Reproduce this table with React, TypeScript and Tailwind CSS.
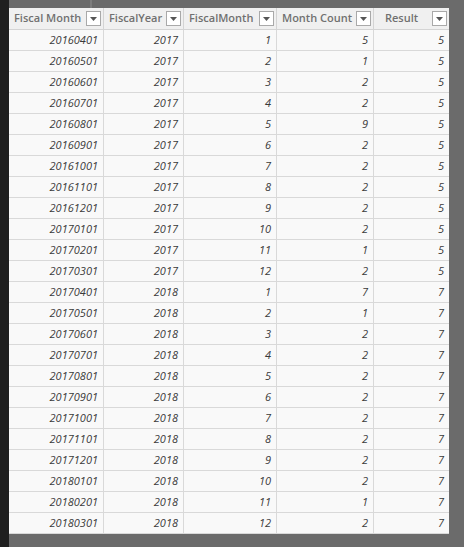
import React from 'react';

const rows: [string, number, number, number, number][] = [
  ['20160401', 2017, 1, 5, 5],
  ['20160501', 2017, 2, 1, 5],
  ['20160601', 2017, 3, 2, 5],
  ['20160701', 2017, 4, 2, 5],
  ['20160801', 2017, 5, 9, 5],
  ['20160901', 2017, 6, 2, 5],
  ['20161001', 2017, 7, 2, 5],
  ['20161101', 2017, 8, 2, 5],
  ['20161201', 2017, 9, 2, 5],
  ['20170101', 2017, 10, 2, 5],
  ['20170201', 2017, 11, 1, 5],
  ['20170301', 2017, 12, 2, 5],
  ['20170401', 2018, 1, 7, 7],
  ['20170501', 2018, 2, 1, 7],
  ['20170601', 2018, 3, 2, 7],
  ['20170701', 2018, 4, 2, 7],
  ['20170801', 2018, 5, 2, 7],
  ['20170901', 2018, 6, 2, 7],
  ['20171001', 2018, 7, 2, 7],
  ['20171101', 2018, 8, 2, 7],
  ['20171201', 2018, 9, 2, 7],
  ['20180101', 2018, 10, 2, 7],
  ['20180201', 2018, 11, 1, 7],
  ['20180301', 2018, 12, 2, 7],
];

const headers = [
  { label: 'Fiscal Month', cls: 'pl-[5px] pr-[2px]' },
  { label: 'FiscalYear', cls: 'pl-[5px] pr-[2px]' },
  { label: 'FiscalMonth', cls: 'pl-[5px] pr-[2px]' },
  { label: 'Month Count', cls: 'pl-[5px] pr-[2px]' },
  { label: 'Result', cls: 'pl-[11px] pr-[2px]' },
];

const cols = 'grid grid-cols-[95px_80px_93px_97px_75px]';

function FilterButton() {
  return (
    <div className="w-[15px] h-[15px] bg-white border border-[#a9a9a9] flex items-center justify-center shrink-0">
      <svg width="7" height="4" viewBox="0 0 7 4">
        <path d="M0 0 L7 0 L3.5 4 Z" fill="#555" />
      </svg>
    </div>
  );
}

function App() {
  return (
    <div
      className="w-[464px] h-[547px] bg-[#6b6b6b] flex overflow-hidden"
      style={{ fontFamily: '"Open Sans", "Noto Sans", sans-serif' }}
    >
      <div className="w-[9px] h-full bg-[#1f1f1f] shrink-0" />
      <div className="flex flex-col">
        <div className="h-[8px] bg-[#6a6a6a] flex">
          <div className="w-[81px]" />
          <div className="w-[2px] bg-[#7c7c7c]" />
        </div>
        <div className="bg-[#f9f9f9] w-[440px]">
          <div className={`${cols} h-[22px] bg-[#f0f0f0] border-b border-[#d4d4d4]`}>
            {headers.map((h, i) => (
              <div
                key={h.label}
                className={`flex items-center justify-between min-w-0 ${h.cls} ${i < 4 ? 'border-r border-[#d4d4d4]' : ''}`}
              >
                <span className="text-[11px] font-semibold text-[#707070] whitespace-nowrap">{h.label}</span>
                <FilterButton />
              </div>
            ))}
          </div>
          {rows.map((r) => (
            <div key={r[0]} className={`${cols} h-[21px] border-b border-[#d9d9d9]`}>
              {r.map((v, i) => (
                <div
                  key={i}
                  className={`flex items-center justify-end pr-[5px] text-[11px] italic text-[#3a3a3a] ${i < 4 ? 'border-r border-[#d9d9d9]' : ''}`}
                >
                  {v}
                </div>
              ))}
            </div>
          ))}
        </div>
      </div>
    </div>
  );
}

export default App;
